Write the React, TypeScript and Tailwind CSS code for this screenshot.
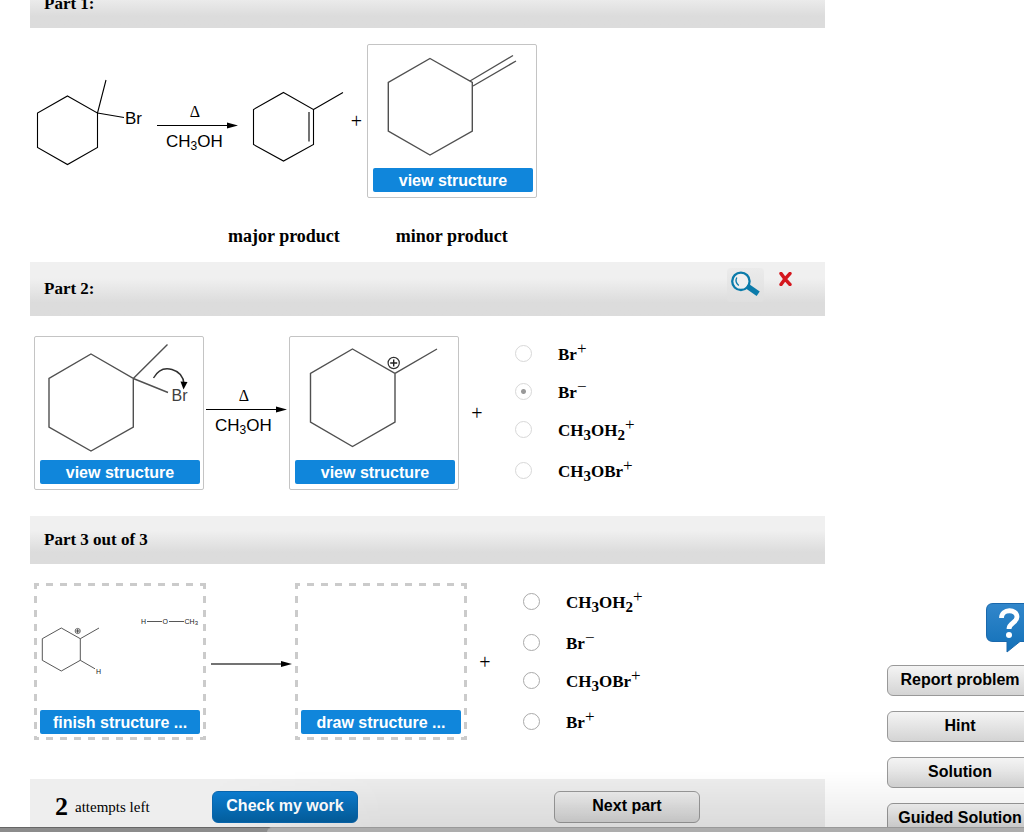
import React, { useState } from "react";

interface SpeciesOption {
  base: React.ReactNode;
  charge: "+" | "−";
  hasSubscript?: boolean;
}

const Sub: React.FC<{ children: React.ReactNode }> = ({ children }) => (
  <span className="relative top-1 text-[15px]">{children}</span>
);

const bromine: SpeciesOption = { base: "Br", charge: "+" };
const bromide: SpeciesOption = { base: "Br", charge: "−" };
const methyloxonium: SpeciesOption = {
  base: (
    <>
      CH<Sub>3</Sub>OH<Sub>2</Sub>
    </>
  ),
  charge: "+",
  hasSubscript: true,
};
const methylBromite: SpeciesOption = {
  base: (
    <>
      CH<Sub>3</Sub>OBr
    </>
  ),
  charge: "+",
  hasSubscript: true,
};

const partTwoOptions = [bromine, bromide, methyloxonium, methylBromite];
const partThreeOptions = [methyloxonium, bromide, methylBromite, bromine];

interface PartHeaderProps {
  title: string;
  className?: string;
  children?: React.ReactNode;
}

const PartHeader: React.FC<PartHeaderProps> = ({
  title,
  className = "h-12",
  children,
}) => (
  <header
    className={`flex items-center bg-linear-to-b from-[#f0f0f0] from-30% to-[#dcdcdc] to-75% pl-3.5 ${className}`}
  >
    <h2 className="text-[17px] leading-6 font-bold">{title}</h2>
    {children}
  </header>
);

const StructureButton: React.FC<{ children: React.ReactNode }> = ({
  children,
}) => (
  <button
    type="button"
    className="block h-6 w-40 rounded-xs bg-[#1086db] pt-px text-center font-['Liberation_Sans',Arial,sans-serif] text-base leading-6 font-bold text-white"
  >
    {children}
  </button>
);

const StructureCard: React.FC<{ children: React.ReactNode }> = ({
  children,
}) => (
  <div className="shrink-0 rounded-xs border border-[#c4c4c4] pr-[3px] pb-[5px] pl-[5px]">
    {children}
    <StructureButton>view structure</StructureButton>
  </div>
);

// dashed outline with wide gaps, one gradient per side
const DrawingCard: React.FC<{ label: string; children?: React.ReactNode }> = ({
  label,
  children,
}) => (
  <div className="flex h-[157px] shrink-0 flex-col justify-end bg-[linear-gradient(90deg,#cbcbcb_50%,transparent_50%),linear-gradient(90deg,#cbcbcb_50%,transparent_50%),linear-gradient(#cbcbcb_50%,transparent_50%),linear-gradient(#cbcbcb_50%,transparent_50%)] bg-[size:14px_3px,14px_3px,3px_14px,3px_14px] bg-[position:-2px_0,-2px_100%,0_-1px,100%_-1px] p-1.5 [background-repeat:repeat-x,repeat-x,repeat-y,repeat-y]">
    {children}
    <StructureButton>{label}</StructureButton>
  </div>
);

const svgFont = "font-['Liberation_Sans',Arial,sans-serif]";

// y is the height of the arrow line inside the row
const ReactionArrow: React.FC<{ y: number }> = ({ y }) => (
  <svg
    width="82"
    height="154"
    viewBox="0 0 82 154"
    className="shrink-0"
    aria-label="heat, methanol"
  >
    <g transform={`translate(0 ${y})`}>
      <text
        x="38"
        y="-8"
        textAnchor="middle"
        className="font-['Liberation_Serif',serif] text-base"
      >
        Δ
      </text>
      <path d="M0 0.5H74" stroke="#000" strokeWidth="1.2" />
      <path d="M70 -2.5L81 0.5L70 3.5Z" />
      <text x="9" y="22" className={`${svgFont} text-[17px]`}>
        CH
        <tspan dy="3" className="text-xs">
          3
        </tspan>
        <tspan dy="-3">OH</tspan>
      </text>
    </g>
  </svg>
);

const Plus: React.FC<{ className?: string }> = ({ className = "" }) => (
  <span className={`shrink-0 text-center text-xl leading-6 ${className}`}>
    +
  </span>
);

interface SpeciesListProps {
  name: string;
  options: SpeciesOption[];
  initial?: number;
  disabled?: boolean;
  className?: string;
}

const SpeciesList: React.FC<SpeciesListProps> = ({
  name,
  options,
  initial = -1,
  disabled = false,
  className = "pt-[9px]",
}) => {
  const [selected, setSelected] = useState(initial);

  return (
    <div
      role="radiogroup"
      aria-label={name}
      className={`self-start ${className}`}
    >
      {options.map((option, i) => (
        <label
          key={i}
          className={`flex items-start last:h-5 ${option.hasSubscript ? "h-[41px]" : "h-[38px]"}`}
        >
          <input
            type="radio"
            name={name}
            checked={selected === i}
            disabled={disabled}
            onChange={() => setSelected(i)}
            className="mr-[26px] size-[17px] shrink-0 appearance-none rounded-full border border-[#aaa] bg-white checked:bg-[radial-gradient(circle,#999_0,#999_2px,transparent_3px)] disabled:border-[#d8d8d8]"
          />
          <span className="text-[17px] leading-5 font-bold whitespace-nowrap">
            {option.base}
            <span className="relative -top-1.5 text-[17px] font-normal">
              {option.charge}
            </span>
          </span>
        </label>
      ))}
    </div>
  );
};

const helpButtons = ["Report problem", "Hint", "Solution", "Guided Solution"];

const App: React.FC = () => {
  return (
    <div className="relative flex h-screen flex-col overflow-hidden bg-white font-['Liberation_Serif','Times_New_Roman',serif] text-black">
      <div className="flex min-h-0 flex-1 overflow-hidden">
        <main className="ml-[30px] min-w-0 flex-1">
          <section>
            <PartHeader title="Part 1:" className="-mt-5 h-12" />
            <div className="flex items-center pt-4 pl-1">
              <svg
                width="123"
                height="154"
                viewBox="34 44 123 154"
                className="shrink-0"
                aria-label="1-bromo-1-methylcyclohexane"
              >
                <path
                  d="M67.5 96L97.5 113V147.5L67.5 164.5L37.5 147.5V113ZM97.5 113L106 80M97.5 113L124 117.5"
                  fill="none"
                  stroke="#000"
                  strokeWidth="1.1"
                />
                <text x="125" y="123.5" className={`${svgFont} text-[17px]`}>
                  Br
                </text>
              </svg>
              <ReactionArrow y={81} />
              <svg
                width="107"
                height="154"
                viewBox="239 44 107 154"
                className="shrink-0"
                aria-label="1-methylcyclohexene"
              >
                <path
                  d="M283.5 92.5L313.5 109.5V144.5L283.5 161L253.5 144.5V109.5ZM313.5 109.5L343 92.5M309 112V141.5"
                  fill="none"
                  stroke="#000"
                  strokeWidth="1.1"
                />
              </svg>
              <Plus className="w-[21px]" />
              <StructureCard>
                <svg
                  width="160"
                  height="123"
                  viewBox="373 45 160 123"
                  aria-label="methylenecyclohexane"
                >
                  <path
                    d="M430 58.5L472.3 82.5V131L430 155L388.3 131V82.5ZM470 81L513 55.5M473 86L516 61"
                    fill="none"
                    stroke="#505050"
                    strokeWidth="1.4"
                  />
                </svg>
              </StructureCard>
            </div>
            <div className="mt-[26px] flex gap-14 pb-3.5 pl-[198px] text-lg leading-6 font-bold">
              <span>major product</span>
              <span>minor product</span>
            </div>
          </section>

          <section>
            <PartHeader title="Part 2:" className="h-[54px]">
              <div className="ml-auto flex items-start gap-[15px] self-start pt-1.5 pr-[33px]">
                <button
                  type="button"
                  aria-label="View details"
                  className="rounded-sm bg-linear-to-b from-[#ebebeb] to-[#dfdfdf]"
                >
                  <svg width="37" height="34" viewBox="0 0 37 34">
                    <circle
                      cx="13.9"
                      cy="13.3"
                      r="8.7"
                      fill="#f0f0f0"
                      stroke="#0b7baa"
                      strokeWidth="2.3"
                    />
                    <path
                      d="M9.8 9.5Q7.5 14 11.8 17.5"
                      fill="none"
                      stroke="#0b7baa"
                      strokeWidth="1.3"
                    />
                    <path d="M20 18L31.2 25.8" stroke="#0b7baa" strokeWidth="5.4" />
                  </svg>
                </button>
                <svg
                  width="13"
                  height="14"
                  viewBox="0 0 13 14"
                  className="mt-1"
                  aria-label="Incorrect"
                >
                  <path
                    d="M2 1.5Q5.5 7 11 12.5M11 1.5Q6 6.5 2 12.5"
                    fill="none"
                    stroke="#d4171e"
                    strokeWidth="3.4"
                    strokeLinecap="round"
                  />
                </svg>
              </div>
            </PartHeader>
            <div className="flex items-center pt-5 pb-[26px] pl-1">
              <StructureCard>
                <svg
                  width="160"
                  height="123"
                  viewBox="40 337 160 123"
                  aria-label="bromide leaving"
                >
                  <path
                    d="M91 354L133.3 378.5V427L91 451L49 427V378.5ZM133.3 378.5L167.5 344.5M133.3 378.5L168 392.5"
                    fill="none"
                    stroke="#505050"
                    strokeWidth="1.4"
                  />
                  <path
                    d="M153.5 378C158 370 165 367.5 172 369.5C179 371.5 183.5 377 184 384"
                    fill="none"
                    stroke="#303030"
                    strokeWidth="1.4"
                  />
                  <path d="M180.5 381.5L187.5 382L183.5 389.5Z" />
                  <text
                    x="171.5"
                    y="401"
                    fill="#404040"
                    className={`${svgFont} text-base`}
                  >
                    Br
                  </text>
                </svg>
              </StructureCard>
              <div className="mr-px ml-[2px] shrink-0">
                <ReactionArrow y={73} />
              </div>
              <StructureCard>
                <svg
                  width="160"
                  height="123"
                  viewBox="295 337 160 123"
                  aria-label="1-methylcyclohexyl cation"
                >
                  <path
                    d="M352.5 349L395 373.3V422L352.5 446.5L310.5 422V373.3ZM395 373.3L437 349"
                    fill="none"
                    stroke="#505050"
                    strokeWidth="1.4"
                  />
                  <circle
                    cx="393.7"
                    cy="363"
                    r="5.6"
                    fill="#fff"
                    stroke="#303030"
                    strokeWidth="1.2"
                  />
                  <path
                    d="M390.2 363H397.2M393.7 359.5V366.5"
                    stroke="#202020"
                    strokeWidth="1.4"
                  />
                </svg>
              </StructureCard>
              <Plus className="mr-[31px] ml-[11px] w-3.5" />
              <SpeciesList
                name="part 2 product"
                options={partTwoOptions}
                initial={1}
                disabled
              />
            </div>
          </section>

          <section>
            <PartHeader title="Part 3 out of 3" />
            <div className="flex items-center pt-[19px] pb-[39px] pl-1">
              <DrawingCard label="finish structure ...">
                <svg
                  width="160"
                  height="120"
                  viewBox="40 590 160 120"
                  aria-label="carbocation and methanol"
                >
                  <path
                    d="M61.3 628L80.3 638.7V660.3L61.3 671L42.3 660.3V638.7ZM80.3 638.7L99 628M80.3 660.3L95 668.8M147 621.5H162M169 621.5H184"
                    fill="none"
                    stroke="#444"
                    strokeWidth="0.9"
                  />
                  <circle
                    cx="77.7"
                    cy="631"
                    r="2.6"
                    fill="#fff"
                    stroke="#333"
                    strokeWidth="0.7"
                  />
                  <path
                    d="M75.7 631H79.7M77.7 629V633"
                    stroke="#222"
                    strokeWidth="0.8"
                  />
                  <g fill="#222" className={`${svgFont} text-[7px]`}>
                    <text x="96" y="673.5">
                      H
                    </text>
                    <text x="141" y="624">
                      H
                    </text>
                    <text x="162.5" y="624">
                      O
                    </text>
                    <text x="184.5" y="624">
                      CH
                      <tspan dy="1" className="text-[6px]">
                        3
                      </tspan>
                    </text>
                  </g>
                </svg>
              </DrawingCard>
              <svg
                width="81"
                height="12"
                viewBox="0 0 81 12"
                className="mt-[5px] mr-[3px] ml-[5px] shrink-0"
                aria-label="yields"
              >
                <path d="M0 6H74" stroke="#444" strokeWidth="1.6" />
                <path d="M70 3L81 6L70 9Z" />
              </svg>
              <DrawingCard label="draw structure ..." />
              <Plus className="mr-[31px] ml-[11px] w-3.5" />
              <SpeciesList
                name="part 3 product"
                options={partThreeOptions}
                className="pt-2.5"
              />
            </div>
          </section>

          <footer className="flex h-[54px] items-start bg-[#eeeeee] pt-3 pl-[25px]">
            <p className="flex h-8 w-[157px] items-center gap-[7px]">
              <span className="text-[26px] leading-8 font-bold">2</span>
              <span className="text-[15px] leading-8">attempts left</span>
            </p>
            <button
              type="button"
              className="h-8 w-[146px] rounded-md border border-[#0a66ad] bg-linear-to-b from-[#0d7ccf] to-[#045f9f] pb-0.5 font-['Liberation_Sans',Arial,sans-serif] text-base leading-6 font-bold text-white"
            >
              Check my work
            </button>
            <button
              type="button"
              className="mr-[125px] ml-auto h-8 w-[146px] rounded-md border border-[#999] bg-linear-to-b from-[#eeeeee] to-[#d4d4d4] pb-0.5 font-['Liberation_Sans',Arial,sans-serif] text-base leading-6 font-bold"
            >
              Next part
            </button>
          </footer>
        </main>

        <aside className="ml-[62px] w-[137px] shrink-0 pt-[603px]">
          <div className="flex w-[146px] flex-col gap-[15px]">
            <button type="button" aria-label="Help" className="-mb-[3px] self-end">
              <svg width="47" height="50" viewBox="0 0 47 50">
                <defs>
                  <linearGradient id="bubble" x1="0" y1="0" x2="0" y2="1">
                    <stop offset="0" stopColor="#3287cb" />
                    <stop offset="1" stopColor="#1270b8" />
                  </linearGradient>
                </defs>
                <path
                  d="M7 0.5H40Q46.5 0.5 46.5 7V32Q46.5 38.5 40 38.5H34L21 49V38.5H7Q0.5 38.5 0.5 32V7Q0.5 0.5 7 0.5Z"
                  fill="url(#bubble)"
                  stroke="#1a68ac"
                />
                <path
                  d="M15.5 15C15.5 5.5 31 5.5 31 14C31 20 23 19.5 23 26"
                  fill="none"
                  stroke="#fff"
                  strokeWidth="4.8"
                />
                <circle cx="23" cy="32" r="3" fill="#fff" />
              </svg>
            </button>
            {helpButtons.map((label) => (
              <button
                key={label}
                type="button"
                className="h-[31px] rounded-md border border-[#999] bg-linear-to-b from-[#f4f4f4] to-[#d4d4d4] pb-0.5 font-['Liberation_Sans',Arial,sans-serif] text-base leading-6 font-bold whitespace-nowrap"
              >
                {label}
              </button>
            ))}
          </div>
        </aside>
      </div>

      {/* edge of the window in front, with its soft shadow */}
      <div className="h-[5px] shrink-0 border-t border-[#666] bg-[#8c8c8c]">
        <div className="-mt-px ml-[267px] h-[5px] rounded-tl-md border-t border-[#999] bg-[#adadad]" />
      </div>
      <div className="pointer-events-none absolute right-0 bottom-[5px] h-14 w-4/5 bg-linear-to-b from-transparent to-black/8 [mask-image:linear-gradient(90deg,transparent,black_180px)]" />
    </div>
  );
};

export default App;
